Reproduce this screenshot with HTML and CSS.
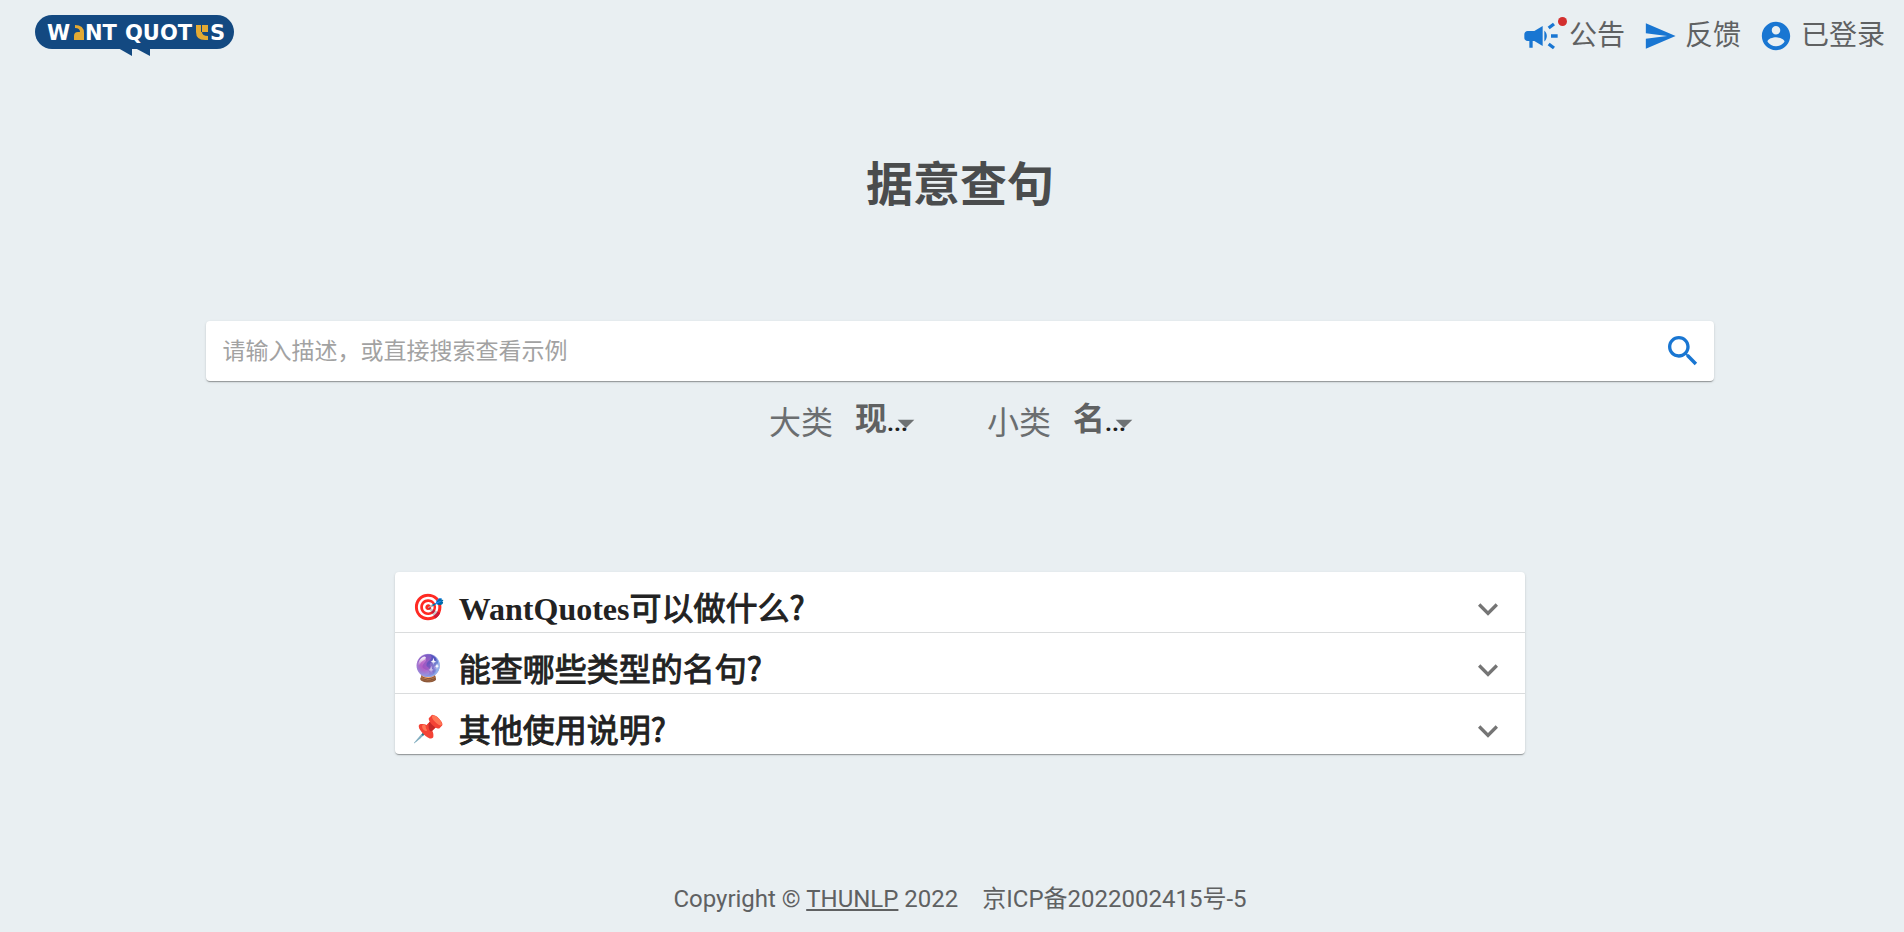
FILE: index.html
```html
<!DOCTYPE html>
<html lang="zh-CN">

<head>
    <meta charset="UTF-8">
    <meta name="viewport" content="width=device-width, initial-scale=1.0">
    <title>WantQuotes 据意查句</title>
    <link rel="stylesheet" href="styles.css">
</head>

<body>
    <header class="header">
        <a href="#" class="logo" aria-label="WantQuotes">
            <svg width="200" height="42" viewBox="0 0 200 42">
                <path d="M83 33h14v8zM100 33h15v8z" fill="#134981" />
                <rect width="199" height="34" rx="17" fill="#134981" />
                <g class="logo-text">
                    <text x="12" y="25">W</text>
                    <text x="50" y="25">NT</text>
                    <text x="90" y="25">QUOT</text>
                    <text x="175" y="25">S</text>
                </g>
                <path d="M40 10q9 0 9 8v7H39v-4q0-4 4-4h2q0-4-5-4zM161 10h5v7h1v-7h6v7h-6q0 4 6 4v4h-3q-9 0-9-8z" fill="#e3aa33" />
            </svg>
        </a>
        <nav class="nav">
            <a href="#" class="nav-item">
                <span class="badge">
                    <svg width="40" height="40" viewBox="0 0 24 24">
                        <path d="M18 11v2h4v-2h-4zm-2 6.61c.96.71 2.21 1.65 3.2 2.39.4-.53.8-1.07 1.2-1.6-.99-.74-2.24-1.68-3.2-2.4-.4.54-.8 1.08-1.2 1.61zM20.4 5.6c-.4-.53-.8-1.07-1.2-1.6-.99.74-2.24 1.68-3.2 2.4.4.53.8 1.07 1.2 1.6.96-.72 2.21-1.65 3.2-2.4zM4 9c-1.1 0-2 .9-2 2v2c0 1.1.9 2 2 2h1v4h2v-4h1l5 3V6L8 9H4zm11.5 3c0-1.33-.58-2.53-1.5-3.35v6.69c.92-.81 1.5-2.01 1.5-3.34z" />
                    </svg>
                </span>
                公告
            </a>
            <a href="#" class="nav-item">
                <svg width="34" height="34" viewBox="0 0 24 24">
                    <path d="M2.01 21 23 12 2.01 3 2 10l15 2-15 2z" />
                </svg>
                反馈
            </a>
            <a href="#" class="nav-item">
                <svg width="34" height="34" viewBox="0 0 24 24">
                    <path d="M12 2C6.48 2 2 6.48 2 12s4.48 10 10 10 10-4.48 10-10S17.52 2 12 2zm0 3c1.66 0 3 1.34 3 3s-1.34 3-3 3-3-1.34-3-3 1.34-3 3-3zm0 14.2c-2.5 0-4.71-1.28-6-3.22.03-1.99 4-3.08 6-3.08 1.99 0 5.97 1.09 6 3.08-1.29 1.94-3.5 3.22-6 3.22z" />
                </svg>
                已登录
            </a>
        </nav>
    </header>

    <main class="main">
        <h1 class="title">据意查句</h1>
        <form class="search">
            <input type="text" class="search-input" aria-label="描述" placeholder="请输入描述，或直接搜索查看示例">
            <button type="submit" class="search-btn" aria-label="搜索">
                <svg width="40" height="40" viewBox="0 0 24 24">
                    <path d="M15.5 14h-.79l-.28-.27C15.41 12.59 16 11.11 16 9.5 16 5.91 13.09 3 9.5 3S3 5.91 3 9.5 5.91 16 9.5 16c1.61 0 3.09-.59 4.23-1.57l.27.28v.79l5 4.99L20.49 19l-4.99-5zm-6 0C7.01 14 5 11.99 5 9.5S7.01 5 9.5 5 14 7.01 14 9.5 11.99 14 9.5 14z" />
                </svg>
            </button>
        </form>
        <div class="filters">
            <div class="filter">
                <label for="big">大类</label>
                <div class="select">
                    <select id="big">
                        <option>现代</option>
                    </select>
                    <span class="dots" aria-hidden="true">...</span>
                    <svg class="arrow" width="40" height="40" viewBox="0 0 24 24">
                        <path d="m7 10 5 5 5-5z" />
                    </svg>
                </div>
            </div>
            <div class="filter">
                <label for="small">小类</label>
                <div class="select">
                    <select id="small">
                        <option>名言</option>
                    </select>
                    <span class="dots" aria-hidden="true">...</span>
                    <svg class="arrow" width="40" height="40" viewBox="0 0 24 24">
                        <path d="m7 10 5 5 5-5z" />
                    </svg>
                </div>
            </div>
        </div>

        <div class="faq">
            <details>
                <summary>
                    <span class="emoji">🎯</span>
                    <h2>WantQuotes<span class="cjk">可以做什么?</span></h2>
                    <svg width="40" height="40" viewBox="0 0 24 24">
                        <path d="M16.59 8.59 12 13.17 7.41 8.59 6 10l6 6 6-6z" />
                    </svg>
                </summary>
            </details>
            <details>
                <summary>
                    <span class="emoji">🔮</span>
                    <h2><span class="cjk">能查哪些类型的名句?</span></h2>
                    <svg width="40" height="40" viewBox="0 0 24 24">
                        <path d="M16.59 8.59 12 13.17 7.41 8.59 6 10l6 6 6-6z" />
                    </svg>
                </summary>
            </details>
            <details>
                <summary>
                    <span class="emoji">📌</span>
                    <h2><span class="cjk">其他使用说明?</span></h2>
                    <svg width="40" height="40" viewBox="0 0 24 24">
                        <path d="M16.59 8.59 12 13.17 7.41 8.59 6 10l6 6 6-6z" />
                    </svg>
                </summary>
            </details>
        </div>
    </main>

    <footer class="footer">
        <span>Copyright © <a href="#">THUNLP</a> 2022</span>
        <span>京ICP备2022002415号-5</span>
    </footer>
</body>

</html>
```

FILE: styles.css
```css
* {
    margin: 0;
    padding: 0;
    box-sizing: border-box;
}

body {
    min-height: 100vh;
    display: flex;
    flex-direction: column;
    font-family: Roboto, "Noto Sans CJK SC", sans-serif;
    color: #5f6162;
    background-color: #e9eff2;
}

a {
    color: inherit;
}

svg {
    display: block;
    flex-shrink: 0;
}

.header {
    height: 71px;
    padding: 0 19px 0 35px;
    display: flex;
    align-items: center;
    justify-content: space-between;
}

.logo-text {
    font-family: "DejaVu Sans", sans-serif;
    font-size: 21px;
    font-weight: 700;
    fill: #ffffff;
}

.nav {
    display: flex;
    gap: 18px;
}

.nav-item {
    display: flex;
    align-items: center;
    gap: 8px;
    font-size: 28px;
    line-height: 40px;
    text-decoration: none;
}

.nav-item svg,
.search-btn svg {
    fill: #1976d2;
}

.badge {
    position: relative;
}

.badge::after {
    content: "";
    position: absolute;
    top: 1px;
    right: -6px;
    width: 9px;
    height: 9px;
    border-radius: 50%;
    background-color: #d32f2f;
}

.main {
    padding: 79px 2px 0 18px;
    display: flex;
    flex-direction: column;
    align-items: center;
}

.title {
    font-size: 47px;
    line-height: 70px;
    color: #4a4c4d;
}

.search,
.faq {
    background-color: #ffffff;
    border-radius: 4px;
    box-shadow: 0 2px 1px -1px rgba(0, 0, 0, .2), 0 1px 1px 0 rgba(0, 0, 0, .14), 0 1px 3px 0 rgba(0, 0, 0, .12);
}

.search {
    width: 80%;
    height: 60px;
    margin-top: 101px;
    padding: 0 11px 0 16px;
    display: flex;
    align-items: center;
}

.search-input {
    flex: 1;
    height: 40px;
    border: 0;
    outline: 0;
    background: none;
    font-family: inherit;
    font-size: 23px;
}

.search-input::placeholder {
    color: #a2a2a2;
}

.search-btn {
    border: 0;
    background: none;
    cursor: pointer;
}

.filters {
    margin-top: 13px;
    display: flex;
    gap: 54px;
}

.filter {
    display: flex;
    gap: 22px;
    font-size: 32px;
    line-height: 58px;
}

.filter label {
    color: #6b6e70;
}

.select {
    position: relative;
    width: 78px;
}

.select select {
    width: 64px;
    height: 50px;
    padding-right: 32px;
    display: block;
    border: 0;
    appearance: none;
    background: none;
    color: inherit;
    font-family: inherit;
    font-size: 32px;
    font-weight: 700;
}

.dots {
    position: absolute;
    top: 0;
    left: 32px;
    font-size: 24px;
    font-weight: 700;
    line-height: 58px;
    color: #222222;
    pointer-events: none;
}

.arrow {
    position: absolute;
    top: 9px;
    left: 31px;
    fill: #6e7273;
    pointer-events: none;
}

.faq {
    width: 60%;
    margin-top: 120px;
}

.faq details + details {
    border-top: 1px solid #dadcdd;
}

.faq summary {
    height: 60px;
    padding: 10px 17px 0 18px;
    display: flex;
    align-items: center;
    gap: 12px;
    list-style: none;
    cursor: pointer;
}

.faq svg {
    margin: 4px 0 0 auto;
    fill: #757575;
}

.faq h2 {
    font-family: "Liberation Serif", serif;
    font-size: 32px;
    line-height: 46px;
    color: #222222;
}

.faq .cjk {
    font-family: "Noto Sans CJK SC", sans-serif;
    font-weight: 400;
    -webkit-text-stroke: 1px #222222;
}

.emoji {
    width: 34px;
    font-family: "Noto Color Emoji", sans-serif;
    font-size: 26px;
    line-height: 46px;
}

.footer {
    margin-top: auto;
    padding: 0 2px 16px 18px;
    display: flex;
    justify-content: center;
    gap: 24px;
    font-size: 24px;
    line-height: 34px;
}
```
